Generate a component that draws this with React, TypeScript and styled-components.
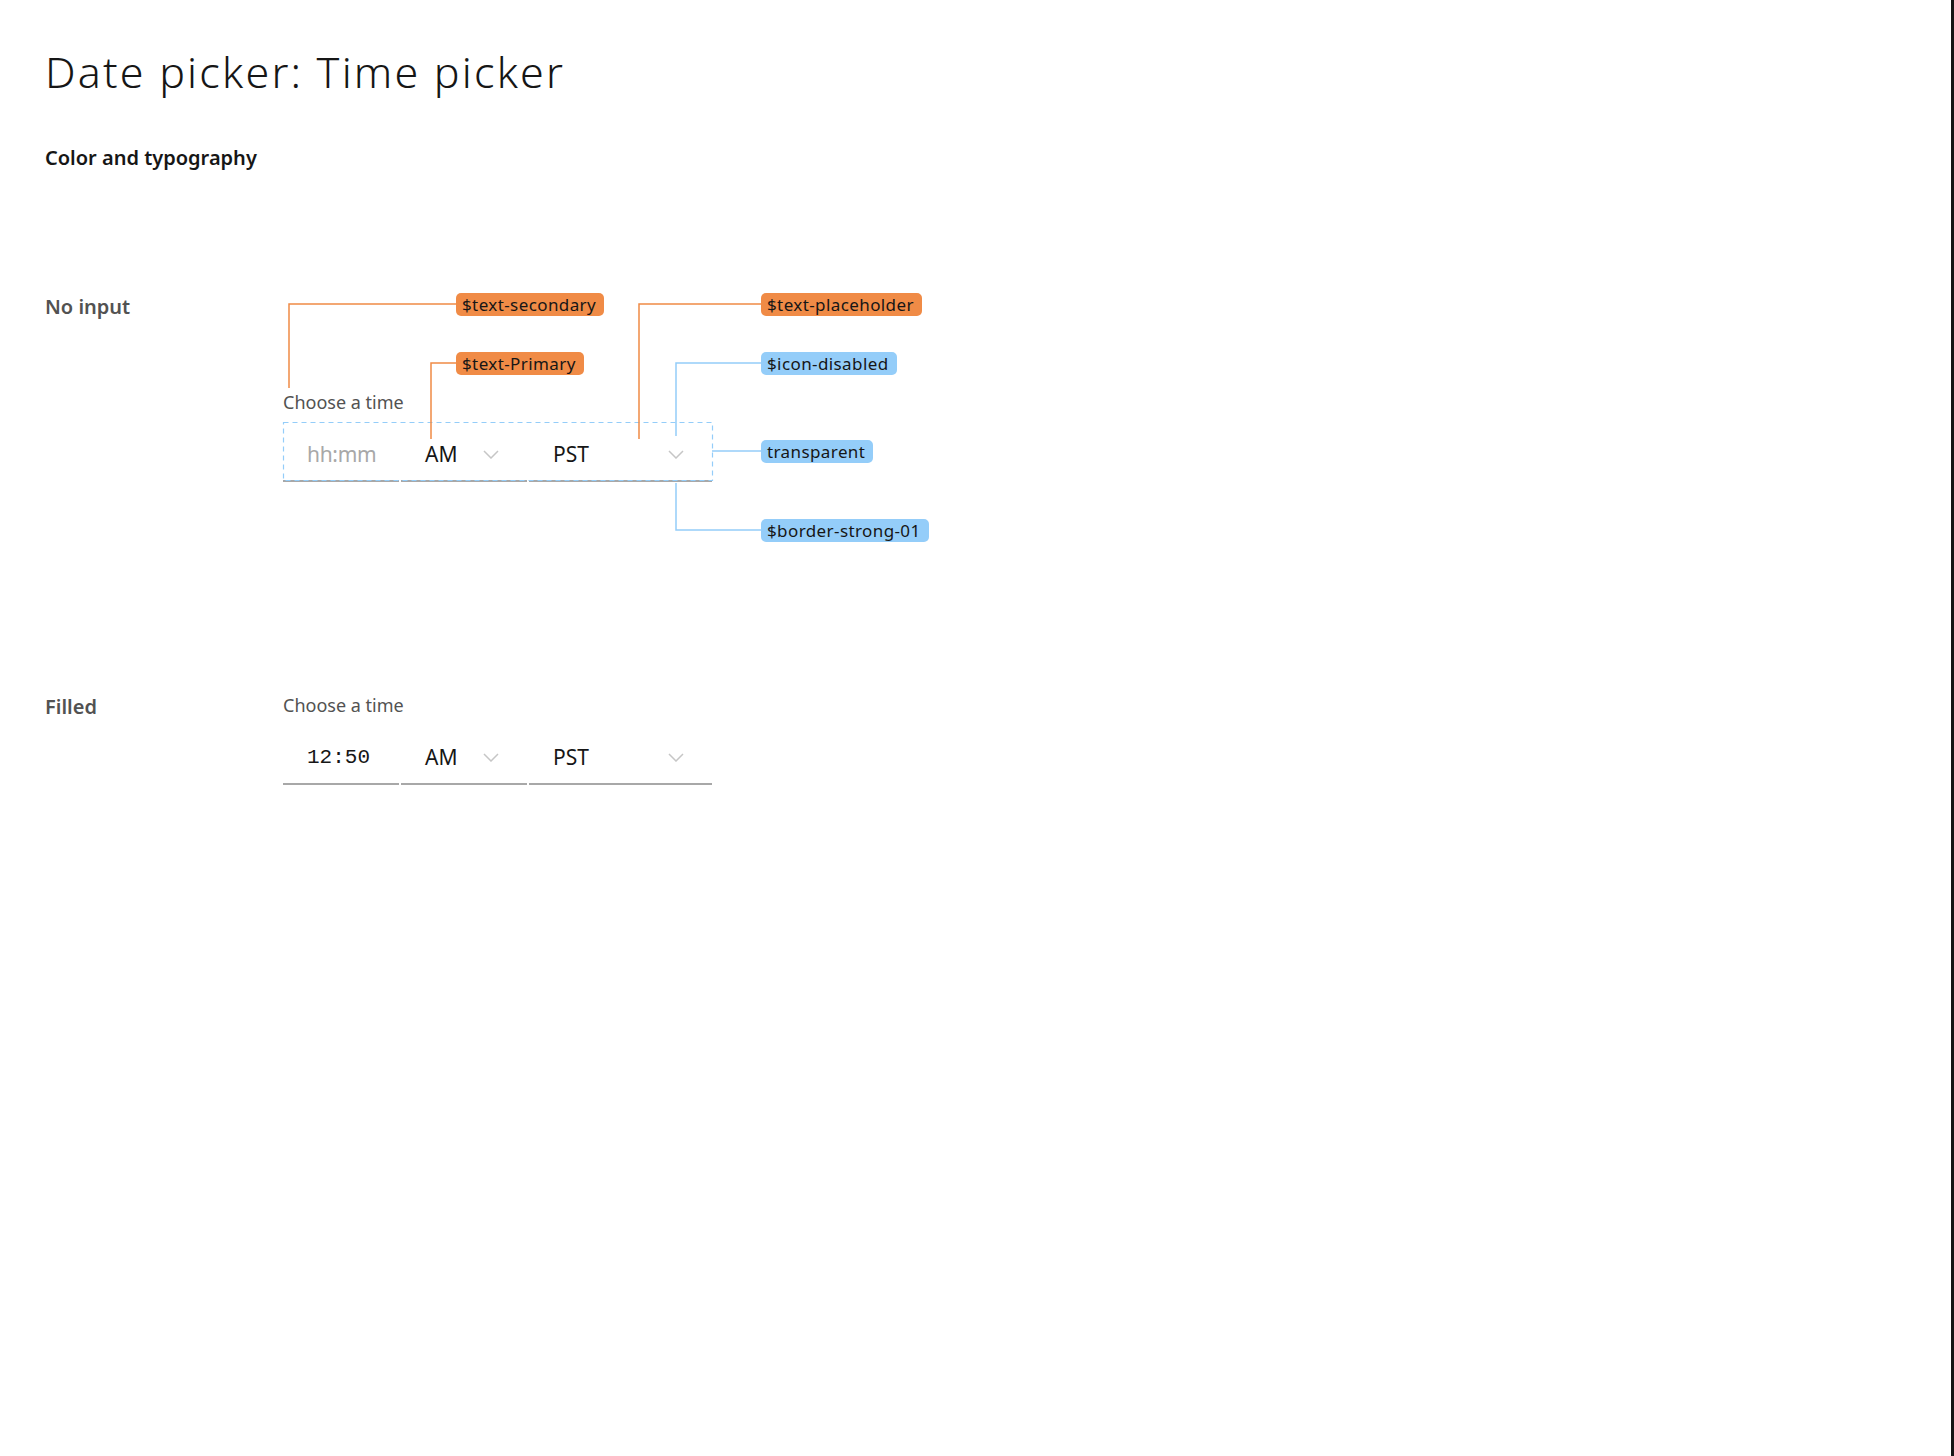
import React from "react";
import styled, { createGlobalStyle } from "styled-components";

const GlobalStyle = createGlobalStyle`
  html, body { margin: 0; padding: 0; background: #ffffff; }
  body { font-family: "Noto Sans", "Open Sans", Arial, sans-serif; color: #161616; }
  * { box-sizing: border-box; }
`;

const ORANGE = "#f08b46";
const BLUE = "#94cdf9";

const Page = styled.div`
  display: flex;
  min-height: 100vh;
`;

const Main = styled.main`
  flex: 1;
  padding: 46px 0 0 45px;
`;

const EdgeBar = styled.div`
  width: 3px;
  background: #161616;
`;

const Title = styled.h1`
  margin: 0;
  font-size: 43px;
  line-height: 52px;
  font-weight: 300;
  color: #161616;
  letter-spacing: 2.2px;
`;

const Subheading = styled.h2`
  margin: 46px 0 0;
  font-size: 20px;
  line-height: 28px;
  font-weight: 600;
  color: #161616;
`;

const Rows = styled.div`
  margin-top: 121px;
  display: grid;
  grid-template-columns: 238px auto;
  row-gap: 151px;
  align-items: start;
`;

const RowLabel = styled.div`
  padding-top: 2px;
  font-size: 20px;
  line-height: 24px;
  font-weight: 600;
  color: #525252;
`;

const Figure = styled.div<{ $annotated?: boolean }>`
  position: relative;
  width: 660px;
  padding-top: ${(p) => (p.$annotated ? "97px" : "0")};
  padding-bottom: ${(p) => (p.$annotated ? "60px" : "0")};
`;

const Picker = styled.div`
  display: flex;
  flex-direction: column;
  width: 429px;
`;

const FieldLabel = styled.label`
  font-size: 18px;
  line-height: 24px;
  color: #525252;
  margin-bottom: 8px;
`;

const FieldRow = styled.div`
  display: flex;
  gap: 2px;
`;

const Cell = styled.div<{ $w: number }>`
  width: ${(p) => p.$w}px;
  height: 60px;
  padding: 6px 28px 0 24px;
  display: flex;
  align-items: center;
  justify-content: space-between;
  border-bottom: 2px solid #a8a8a8;
  font-size: 21px;
  line-height: 28px;
  color: #161616;
`;

const TimeText = styled.span<{ $placeholder?: boolean }>`
  font-family: ${(p) =>
    p.$placeholder ? '"Noto Sans", "Open Sans", sans-serif' : '"Liberation Mono", "DejaVu Sans Mono", monospace'};
  color: ${(p) => (p.$placeholder ? "#a8a8a8" : "#161616")};
  letter-spacing: ${(p) => (p.$placeholder ? "-0.3px" : "0")};
  padding-top: ${(p) => (p.$placeholder ? "0" : "2px")};
`;

const SelectText = styled.span``;

const Chevron = () => (
  <svg width="16" height="9" viewBox="0 0 16 9" fill="none">
    <path d="M1 1l7 7 7-7" stroke="#c6c6c6" strokeWidth="1.5" />
  </svg>
);

const Leaders = styled.svg`
  position: absolute;
  left: 0;
  top: 0;
  width: 100%;
  height: 100%;
  overflow: visible;
  pointer-events: none;
`;

const Badge = styled.span<{ $x: number; $y: number; $tone: "orange" | "blue" }>`
  position: absolute;
  left: ${(p) => p.$x}px;
  top: ${(p) => p.$y}px;
  height: 23px;
  padding: 0 8px 0 6px;
  border-radius: 5px;
  background: ${(p) => (p.$tone === "orange" ? ORANGE : BLUE)};
  color: #161616;
  font-size: 17px;
  line-height: 23px;
  letter-spacing: 0.4px;
  white-space: nowrap;
`;

function TimePicker({ value }: { value?: string }) {
  return (
    <Picker>
      <FieldLabel>Choose a time</FieldLabel>
      <FieldRow>
        <Cell $w={116}>
          <TimeText $placeholder={!value}>{value ?? "hh:mm"}</TimeText>
        </Cell>
        <Cell $w={126}>
          <SelectText>AM</SelectText>
          <Chevron />
        </Cell>
        <Cell $w={183}>
          <SelectText>PST</SelectText>
          <Chevron />
        </Cell>
      </FieldRow>
    </Picker>
  );
}

const badges: { text: string; x: number; y: number; tone: "orange" | "blue" }[] = [
  { text: "$text-secondary", x: 173, y: 0, tone: "orange" },
  { text: "$text-Primary", x: 173, y: 59, tone: "orange" },
  { text: "$text-placeholder", x: 478, y: 0, tone: "orange" },
  { text: "$icon-disabled", x: 478, y: 59, tone: "blue" },
  { text: "transparent", x: 478, y: 147, tone: "blue" },
  { text: "$border-strong-01", x: 478, y: 226, tone: "blue" },
];

export default function App() {
  return (
    <>
      <GlobalStyle />
      <Page>
        <Main>
          <Title>Date picker: Time picker</Title>
          <Subheading>Color and typography</Subheading>
          <Rows>
            <RowLabel>No input</RowLabel>
            <Figure $annotated>
              <TimePicker />
              <Leaders>
                <rect x="0.5" y="129.5" width="429" height="58" fill="none" stroke={BLUE} strokeWidth="1.2" strokeDasharray="5 4" />
                <g fill="none" stroke={ORANGE} strokeWidth="1.5">
                  <path d="M6 95V11H173" />
                  <path d="M148 146V70H173" />
                  <path d="M356 146V11H478" />
                </g>
                <g fill="none" stroke={BLUE} strokeWidth="1.5">
                  <path d="M393 143V70H478" />
                  <path d="M429 158H478" />
                  <path d="M393 190V237H478" />
                </g>
              </Leaders>
              {badges.map((b) => (
                <Badge key={b.text} $x={b.x} $y={b.y} $tone={b.tone}>
                  {b.text}
                </Badge>
              ))}
            </Figure>
            <RowLabel>Filled</RowLabel>
            <Figure>
              <TimePicker value="12:50" />
            </Figure>
          </Rows>
        </Main>
        <EdgeBar />
      </Page>
    </>
  );
}
